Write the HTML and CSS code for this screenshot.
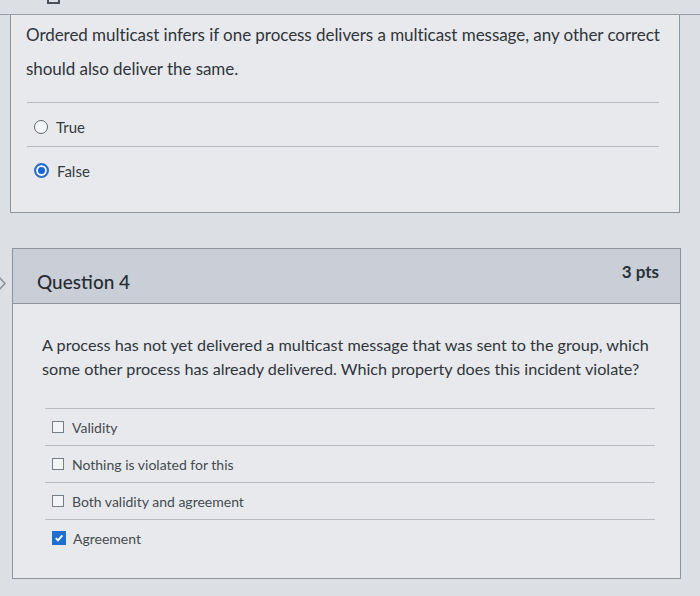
FILE: index.html
```html
<!DOCTYPE html>
<html>
<head>
<meta charset="utf-8">
<link rel="stylesheet" href="styles.css">
</head>
<body>
<div class="topstrip">
  <span class="top-icon"></span>
</div>
<div class="card card-first">
  <p class="qtext qtext-first">Ordered multicast infers if one process delivers a multicast message, any other correct should also deliver the same.</p>
  <div class="answers answers-first">
    <div class="row radio-row"><span class="radio"></span><span class="label">True</span></div>
    <div class="row radio-row"><span class="radio checked"></span><span class="label">False</span></div>
  </div>
</div>

<div class="q4-wrap">
  <div class="chev"><svg width="10" height="20" viewBox="0 0 10 20"><path d="M-1 3 L5 9.5 L-1 16" fill="none" stroke="#8d949b" stroke-width="1.6"/></svg></div>
  <div class="card card-second">
    <div class="header">
      <h2 class="title">Question 4</h2>
      <span class="pts">3 pts</span>
    </div>
    <p class="qtext qtext-second">A process has not yet delivered a multicast message that was sent to the group, which some other process has already delivered. Which property does this incident violate?</p>
    <div class="answers answers-second">
      <div class="row check-row"><span class="box"></span><span class="label">Validity</span></div>
      <div class="row check-row"><span class="box"></span><span class="label">Nothing is violated for this</span></div>
      <div class="row check-row"><span class="box"></span><span class="label">Both validity and agreement</span></div>
      <div class="row check-row"><span class="box checked"><svg width="10" height="10" viewBox="0 0 10 10"><path d="M1.8 5.2 L4 7.4 L8.4 2.4" fill="none" stroke="#fff" stroke-width="1.8"/></svg></span><span class="label">Agreement</span></div>
    </div>
  </div>
</div>
</body>
</html>
```

FILE: styles.css
```css
* { box-sizing: border-box; }
body {
  margin: 0;
  background: #dcdfe3;
  font-family: Lato, "Noto Sans", sans-serif;
  color: #2f353b;
  width: 700px;
  height: 596px;
  overflow: hidden;
}
.topstrip {
  height: 15px;
  border-bottom: 1px solid #9aa0a6;
  display: flex;
  align-items: flex-start;
  padding-left: 47px;
}
.top-icon {
  width: 13px;
  height: 4px;
  border: 2px solid #4a5057;
  border-top: none;
}
.card {
  border: 1px solid #8f959c;
  background: #e7e9ec;
}
.card-first {
  margin-left: 10px;
  width: 670px;
  height: 198px;
  border-top: none;
  padding: 3px 16px 0 15px;
}
.qtext {
  margin: 0;
  font-size: 17px;
}
.qtext-first {
  line-height: 34px;
  letter-spacing: -0.05px;
}
.answers-first {
  margin-top: 16px;
  margin-left: 1px;
  margin-right: 4px;
}
.row {
  display: flex;
  align-items: center;
  border-top: 1px solid #b7bcc2;
}
.radio-row {
  height: 44px;
  padding-left: 7px;
  padding-top: 4px;
}
.radio {
  width: 14px;
  height: 14px;
  border-radius: 50%;
  border: 1.5px solid #5f666d;
  background: #f4f5f6;
  margin-right: 8px;
}
.radio.checked {
  border: 2px solid #2b6fc4;
  background: #1766d6;
  box-shadow: inset 0 0 0 2px #f4f6f8;
  width: 15px;
  height: 15px;
}
.label {
  font-size: 15px;
  color: #353b41;
}
.q4-wrap {
  display: flex;
  margin-top: 35px;
}
.chev {
  width: 12px;
  padding-top: 26px;
}
.card-second {
  width: 669px;
  height: 331px;
}
.header {
  height: 55px;
  background: #c9ced7;
  border-bottom: 1px solid #8f959c;
  display: flex;
  justify-content: space-between;
  padding: 0 21px 0 24px;
}
.title {
  margin: 0;
  font-size: 19px;
  font-weight: 500;
  padding-top: 11px;
  line-height: 44px;
  color: #262c32;
}
.pts {
  font-size: 17px;
  font-weight: 700;
  padding-top: 12px;
  color: #2b3137;
}
.qtext-second {
  line-height: 24px;
  padding: 29px 8px 0 29px;
  font-size: 16.2px;
}
.answers-second {
  margin: 27px 25px 0 32px;
}
.check-row {
  height: 37px;
  padding-left: 7px;
}
.box {
  width: 12px;
  height: 12px;
  border: 1.5px solid #777e85;
  background: #f3f4f5;
  margin-right: 8px;
  display: flex;
  align-items: center;
  justify-content: center;
}
.box.checked {
  background: #1f6fd0;
  border-color: #1f6fd0;
  width: 14px;
  height: 14px;
  margin-right: 7px;
}
.check-row .label {
  font-size: 14px;
  color: #454b51;
}
```
